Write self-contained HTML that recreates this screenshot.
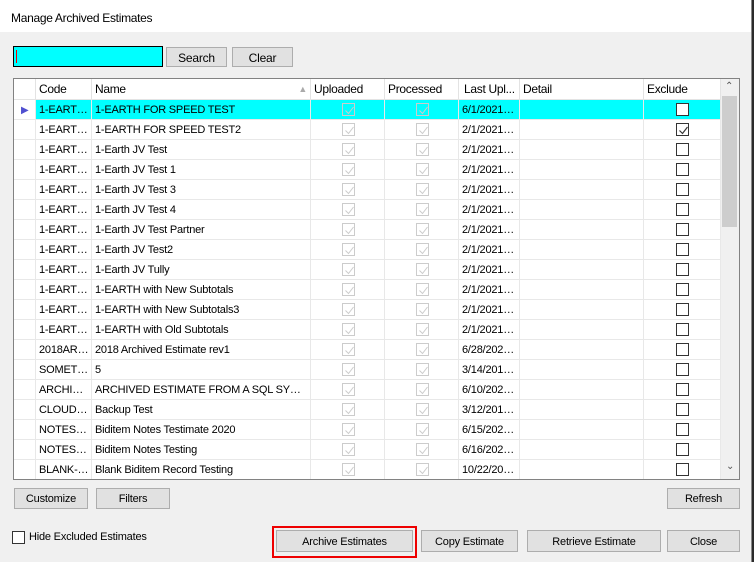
<!DOCTYPE html><html><head><style>
*{box-sizing:border-box;margin:0;padding:0}
body{width:754px;height:562px;background:#2b2b2b;font-family:"Liberation Sans",sans-serif;font-size:11px;letter-spacing:-0.2px;color:#000;position:relative;overflow:hidden}
.win{position:absolute;left:0;top:0;width:752px;height:562px;background:#f0f0f0;border-right:1px solid #888}
.title{position:absolute;left:0;top:0;width:751px;height:32px;background:#fff}
.a{position:absolute}
.btn{position:absolute;background:#e1e1e1;border:1px solid #adadad;text-align:center;line-height:21px}
.grid{position:absolute;left:13px;top:78px;width:727px;height:402px;border:1px solid #828282;background:#fff;overflow:hidden}
.row{position:absolute;left:0;height:20px;width:707px}
.c{position:absolute;top:0;height:20px;border-right:1px solid #e8e8e8;border-bottom:1px solid #e8e8e8;line-height:21px;padding-left:3px;padding-right:2px;white-space:nowrap;overflow:hidden;text-overflow:ellipsis}
.hd .c{border-color:#e3e3e3;line-height:21px}
.cb{position:absolute;width:13px;height:13px;border:1px solid #333;background:#fff;top:3px}
.dcb{position:absolute;width:13px;height:13px;border:1px solid #ccc;top:3px}
</style></head><body>
<div class="win">
<div class="title"></div>
<div class="a" style="left:11px;top:11px;font-size:12px;letter-spacing:-0.3px">Manage Archived Estimates</div>
<div class="a" style="left:13px;top:46px;width:150px;height:21px;background:#0ff;border:1px solid #000"><div style="position:absolute;left:2px;top:3px;width:1px;height:13px;background:#e00"></div></div>
<div class="btn" style="left:166px;top:47px;width:61px;height:20px;font-size:12px;line-height:20px">Search</div>
<div class="btn" style="left:232px;top:47px;width:61px;height:20px;font-size:12px;line-height:20px">Clear</div>
<div class="grid" id="g"></div>
<div class="btn" style="left:14px;top:488px;width:74px;height:21px">Customize</div>
<div class="btn" style="left:96px;top:488px;width:74px;height:21px">Filters</div>
<div class="btn" style="left:667px;top:488px;width:73px;height:21px">Refresh</div>
<div class="a" style="left:12px;top:531px;width:13px;height:13px;border:1px solid #333;background:#fff"></div>
<div class="a" style="left:29px;top:531px">Hide Excluded Estimates</div>
<div class="a" style="left:272px;top:526px;width:145px;height:32px;border:2px solid #e00"></div>
<div class="btn" style="left:276px;top:530px;width:137px;height:22px;line-height:23px">Archive Estimates</div>
<div class="btn" style="left:421px;top:530px;width:97px;height:22px;line-height:23px">Copy Estimate</div>
<div class="btn" style="left:527px;top:530px;width:134px;height:22px;line-height:23px">Retrieve Estimate</div>
<div class="btn" style="left:667px;top:530px;width:73px;height:22px;line-height:23px">Close</div>
</div>
<script>
var rows=[["1-EARTHX","1-EARTH FOR SPEED TEST","6/1/2021 10"],["1-EARTHX","1-EARTH FOR SPEED TEST2","2/1/2021 10"],["1-EARTHX","1-Earth JV Test","2/1/2021 10"],["1-EARTHX","1-Earth JV Test 1","2/1/2021 10"],["1-EARTHX","1-Earth JV Test 3","2/1/2021 10"],["1-EARTHX","1-Earth JV Test 4","2/1/2021 10"],["1-EARTHX","1-Earth JV Test Partner","2/1/2021 10"],["1-EARTHX","1-Earth JV Test2","2/1/2021 10"],["1-EARTHX","1-Earth JV Tully","2/1/2021 10"],["1-EARTHX","1-EARTH with New Subtotals","2/1/2021 10"],["1-EARTHX","1-EARTH with New Subtotals3","2/1/2021 10"],["1-EARTHX","1-EARTH with Old Subtotals","2/1/2021 10"],["2018ARCH","2018 Archived Estimate rev1","6/28/2020 1"],["SOMETHING","5","3/14/2019 1"],["ARCHIVED","ARCHIVED ESTIMATE FROM A SQL SYSTEM","6/10/2020 1"],["CLOUDBK","Backup Test","3/12/2019 1"],["NOTES2020","Biditem Notes Testimate 2020","6/15/2020 1"],["NOTESTING","Biditem Notes Testing","6/16/2020 1"],["BLANK-BID","Blank Biditem Record Testing","10/22/2019 1"]];
var cols=[[0,22],[22,56],[78,219],[297,74],[371,74],[445,61],[506,124],[630,77]];
var tick='<svg width="11" height="11" style="position:absolute;left:1px;top:1px"><path d="M1.5 5.5 L4.5 8.5 L9.5 2" fill="none" stroke="#ccc" stroke-width="1"/></svg>';
var tickd='<svg width="11" height="11" style="position:absolute;left:1px;top:1px"><path d="M1.5 5.5 L4.5 8.5 L9.5 2" fill="none" stroke="#333" stroke-width="1.2"/></svg>';
var h='<div class="row hd" style="top:0;height:21px">';
var hn=["","Code","Name","Uploaded","Processed","Last Upl...","Detail","Exclude"];
cols.forEach(function(c,i){h+='<div class="c" style="left:'+c[0]+'px;width:'+c[1]+'px;height:21px;padding-left:'+(i==5?5:3)+'px;font-size:12px;letter-spacing:-0.3px">'+hn[i]+(i==2?'<span style="position:absolute;right:3px;top:0;color:#aaa;font-size:9px">&#9650;</span>':'')+'</div>'});
h+='</div>';
rows.forEach(function(r,k){var t=21+k*20;var bg=k==0?'#0ff':'#fff';
h+='<div class="row" style="top:'+t+'px">';
h+='<div class="c" style="left:0;width:22px;background:#fff">'+(k==0?'<span style="position:absolute;left:7px;top:0;color:#5050d0;font-size:10px">&#9654;</span>':'')+'</div>';
h+='<div class="c" style="left:22px;width:56px;background:'+bg+'">'+r[0]+'</div>';
h+='<div class="c" style="left:78px;width:219px;background:'+bg+'">'+r[1]+'</div>';
h+='<div class="c" style="left:297px;width:74px;background:'+bg+'"><div class="dcb" style="left:31px">'+tick+'</div></div>';
h+='<div class="c" style="left:371px;width:74px;background:'+bg+'"><div class="dcb" style="left:31px">'+tick+'</div></div>';
h+='<div class="c" style="left:445px;width:61px;background:'+bg+'">'+r[2]+'</div>';
h+='<div class="c" style="left:506px;width:124px;background:'+bg+'"></div>';
h+='<div class="c" style="left:630px;width:77px;background:'+bg+'"><div class="cb" style="left:32px">'+(k==1?tickd:'')+'</div></div>';
h+='</div>';});
h+='<div style="position:absolute;left:707px;top:0;width:18px;height:400px;background:#f0f0f0"><div style="position:absolute;left:4px;top:2px;font-size:10px;color:#555">&#8963;</div><div style="position:absolute;left:1px;top:17px;width:15px;height:131px;background:#cdcdcd"></div><div style="position:absolute;left:5px;top:382px;font-size:10px;color:#555">&#8964;</div></div>';
document.getElementById('g').innerHTML=h;
</script>
</body></html>
